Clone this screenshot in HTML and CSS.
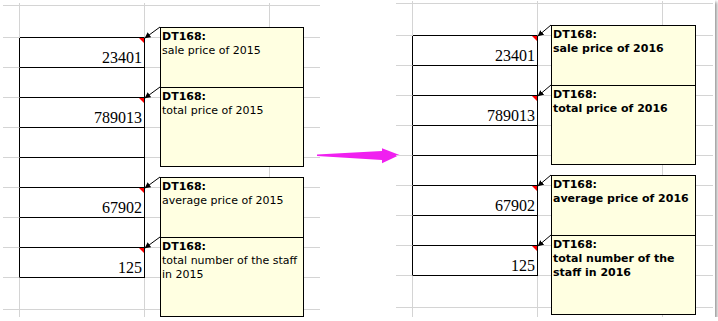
FILE: index.html
```html
<!DOCTYPE html>
<html lang="en">

<head>
    <meta charset="UTF-8">
    <meta name="viewport" content="width=device-width, initial-scale=1.0">
    <title>Comments before and after</title>
    <link rel="stylesheet" href="styles.css">
</head>

<body>
    <div class="frame">

        <!-- sheet before: comments with 2015 -->
        <div class="sheet sheet-before">
            <div class="row stub"><div></div><div></div><div></div><div></div></div>
            <div class="row head"><div></div><div></div><div></div><div></div></div>
            <div class="row data"><div></div><div class="val">23401<span class="mark"></span></div><div></div><div></div></div>
            <div class="row data"><div></div><div></div><div></div><div></div></div>
            <div class="row data"><div></div><div class="val">789013<span class="mark"></span></div><div></div><div></div></div>
            <div class="row data"><div></div><div></div><div></div><div></div></div>
            <div class="row data"><div></div><div></div><div></div><div></div></div>
            <div class="row data"><div></div><div class="val">67902<span class="mark"></span></div><div></div><div></div></div>
            <div class="row data"><div></div><div></div><div></div><div></div></div>
            <div class="row data"><div></div><div class="val">125<span class="mark"></span></div><div></div><div></div></div>
            <div class="row tail"><div></div><div></div><div></div><div></div></div>
            <div class="row rest"><div></div><div></div><div></div><div></div></div>

            <svg class="leaders" width="317" height="316">
                <defs>
                    <marker id="head-a" markerWidth="6" markerHeight="6" refX="5.5" refY="3" orient="auto">
                        <path d="M0,0 L6,3 L0,6 z" fill="#000" />
                    </marker>
                </defs>
                <line x1="157" y1="24" x2="142" y2="35" marker-end="url(#head-a)" />
                <line x1="157" y1="84" x2="142" y2="95" marker-end="url(#head-a)" />
                <line x1="157" y1="174" x2="142" y2="185" marker-end="url(#head-a)" />
                <line x1="157" y1="234" x2="142" y2="245" marker-end="url(#head-a)" />
            </svg>

            <div class="note n1"><b>DT168:</b><br>sale price of 2015</div>
            <div class="note n2"><b>DT168:</b><br>total price of 2015</div>
            <div class="note n3"><b>DT168:</b><br>average price of 2015</div>
            <div class="note n4"><b>DT168:</b><br>total number of the staff in 2015</div>
        </div>

        <svg class="big-arrow" width="76" height="20">
            <polygon points="-3,9.4 62,6 62,3.2 79.5,10 62,18.2 62,15 -3,10.9" fill="#f020f0" />
        </svg>

        <!-- sheet after: comments with 2016 -->
        <div class="sheet sheet-after">
            <div class="row stub"><div></div><div></div><div></div><div></div></div>
            <div class="row head"><div></div><div></div><div></div><div></div></div>
            <div class="row data"><div></div><div class="val">23401<span class="mark"></span></div><div></div><div></div></div>
            <div class="row data"><div></div><div></div><div></div><div></div></div>
            <div class="row data"><div></div><div class="val">789013<span class="mark"></span></div><div></div><div></div></div>
            <div class="row data"><div></div><div></div><div></div><div></div></div>
            <div class="row data"><div></div><div></div><div></div><div></div></div>
            <div class="row data"><div></div><div class="val">67902<span class="mark"></span></div><div></div><div></div></div>
            <div class="row data"><div></div><div></div><div></div><div></div></div>
            <div class="row data"><div></div><div class="val">125<span class="mark"></span></div><div></div><div></div></div>
            <div class="row tail"><div></div><div></div><div></div><div></div></div>
            <div class="row rest"><div></div><div></div><div></div><div></div></div>

            <svg class="leaders" width="317" height="316">
                <defs>
                    <marker id="head-b" markerWidth="6" markerHeight="6" refX="5.5" refY="3" orient="auto">
                        <path d="M0,0 L6,3 L0,6 z" fill="#000" />
                    </marker>
                </defs>
                <line x1="155" y1="24" x2="142" y2="35" marker-end="url(#head-b)" />
                <line x1="155" y1="84" x2="142" y2="95" marker-end="url(#head-b)" />
                <line x1="155" y1="174" x2="142" y2="185" marker-end="url(#head-b)" />
                <line x1="155" y1="234" x2="142" y2="245" marker-end="url(#head-b)" />
            </svg>

            <div class="note n1">DT168:<br>sale price of 2016</div>
            <div class="note n2">DT168:<br>total price of 2016</div>
            <div class="note n3">DT168:<br>average price of 2016</div>
            <div class="note n4">DT168:<br>total number of the staff in 2016</div>
        </div>

    </div>
</body>

</html>
```

FILE: styles.css
```css
/* Two worksheet snippets side by side */
* {
    box-sizing: border-box;
    margin: 0;
    padding: 0;
}

body {
    background-color: #fff;
}

.frame {
    width: 715px;
    height: 317px;
    display: flex;
    align-items: flex-start;
    background-color: #fff;
    box-shadow: 2px 2px 3px rgba(0, 0, 0, 0.4);
    overflow: visible;
}

/* sheet grid */
.sheet {
    position: relative;
    align-self: stretch;
    width: 317px;
    display: flex;
    flex-direction: column;
    flex-shrink: 0;
}

.sheet-before {
    margin-left: 3px;
    margin-top: 3px;
}

.sheet-after {
    margin-top: 1px;
}

.row {
    display: grid;
    grid-template-columns: 17px 125px 125px 50px;
    height: 30px;
}

.row > div {
    border-right: 1px solid #d4d4d4;
    border-bottom: 1px solid #d4d4d4;
}

.row > div:last-child {
    border-right: none;
}

.row.stub {
    height: 2px;
}

.row.stub > div,
.row.rest > div {
    border-bottom: none;
}

.row.head {
    height: 33px;
    border-top: 1px solid #d4d4d4;
}

.row.head > div:nth-child(2) {
    border-bottom-color: #000;
}

.row.data > div:nth-child(1) {
    border-right-color: #000;
}

.row.data > div:nth-child(2) {
    border-right-color: #000;
    border-bottom-color: #000;
}

.row.tail {
    height: 32px;
}

.row.rest {
    flex: 1;
}

/* values */
.val {
    position: relative;
    display: flex;
    justify-content: flex-end;
    align-items: flex-end;
    padding-right: 2px;
    font-family: "Liberation Serif", serif;
    font-size: 16px;
    line-height: 18px;
    color: #000;
}

.mark {
    position: absolute;
    top: 0;
    right: 0;
    width: 5px;
    height: 5px;
    background-color: #f00;
    clip-path: polygon(0 0, 100% 0, 100% 100%);
}

/* comments */
.leaders {
    position: absolute;
    top: 0;
    left: 0;
    overflow: visible;
}

.leaders line {
    stroke: #000;
    stroke-width: 1;
}

.note {
    position: absolute;
    width: 144px;
    height: 80px;
    padding: 2px 2px 0 1px;
    background-color: #ffffe1;
    border: 1px solid #000;
    font-family: "DejaVu Sans", sans-serif;
    font-size: 11px;
    line-height: 14px;
    color: #000;
}

.sheet-before .note {
    left: 157px;
}

.sheet-after .note {
    left: 155px;
    width: 145px;
    font-weight: bold;
}

.n1 {
    top: 24px;
}

.n2 {
    top: 84px;
}

.n3 {
    top: 174px;
}

.n4 {
    top: 234px;
}

.big-arrow {
    flex-shrink: 0;
    margin-top: 145px;
    overflow: visible;
}
```
